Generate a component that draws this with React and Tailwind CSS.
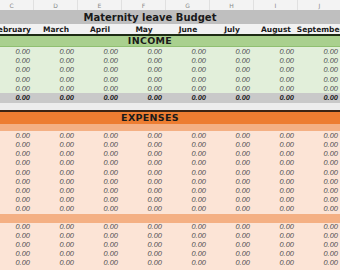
import React from "react"

const cols = ["C", "D", "E", "F", "G", "H", "I", "J"]
const months = ["February", "March", "April", "May", "June", "July", "August", "September"]

function ValueRow({ bg, h = "h-[9.2px]", bold = false }) {
  return (
    <div className={`grid grid-cols-8 ${bg} ${h}`}>
      {cols.map((c) => (
        <div
          key={c}
          className={`flex items-center justify-end pr-[4px] text-[7.5px] italic leading-none ${
            bold ? "font-bold text-[#222]" : "text-[#4f4f4f]"
          }`}
          style={{ fontFamily: '"Liberation Sans", Arial, sans-serif' }}
        >
          0.00
        </div>
      ))}
    </div>
  )
}

export default function App() {
  return (
    <div
      className="w-[340px] h-[270px] overflow-hidden bg-[#fce4d6]"
      style={{ fontFamily: '"DejaVu Sans", "Liberation Sans", sans-serif' }}
    >
      <div className="w-[352px] -ml-[10px]">
        {/* column letters */}
        <div className="grid grid-cols-8 h-[10px] bg-[#f3f3f3]">
          {cols.map((c) => (
            <div
              key={c}
              className="flex items-center justify-center border-r border-[#e0e0e0] text-[6px] text-[#8a8a8a]"
            >
              {c}
            </div>
          ))}
        </div>

        {/* title */}
        <div className="h-[14px] bg-[#bfbfbf] flex items-center justify-center pr-[32px]">
          <span className="text-[10px] font-bold text-[#1a1a1a]">Maternity leave Budget</span>
        </div>

        {/* month headers */}
        <div className="grid grid-cols-8 h-[12px] bg-[#f2f2f2] border-b-2 border-[#1d2b14]">
          {months.map((m) => (
            <div
              key={m}
              className="flex items-center justify-center text-[7.5px] font-bold text-[#1a1a1a] whitespace-nowrap"
            >
              {m}
            </div>
          ))}
        </div>

        {/* income */}
        <div className="h-[11px] bg-[#a9d08e] border-b border-[#8fbf70] flex items-center justify-center pr-[32px]">
          <span className="text-[9.5px] font-bold text-[#1a1a1a] tracking-[0.3px]">INCOME</span>
        </div>
        {[0, 1, 2, 3, 4].map((i) => (
          <ValueRow key={i} bg="bg-[#e2efda]" h="h-[9.3px]" />
        ))}
        <ValueRow bg="bg-[#c9c9c9]" h="h-[9.5px]" bold />
        <div className="h-[7px] bg-[#ededed]" />

        {/* expenses */}
        <div className="h-[14px] bg-[#ed7d31] border-t-2 border-[#3a2414] flex items-center justify-center pr-[32px]">
          <span className="text-[9.5px] font-bold text-[#1a1a1a] tracking-[0.3px]">EXPENSES</span>
        </div>
        <div className="h-[7px] bg-[#f4b084]" />
        {[0, 1, 2, 3, 4, 5, 6, 7, 8].map((i) => (
          <ValueRow key={i} bg="bg-[#fce4d6]" h="h-[9.2px]" />
        ))}
        <div className="h-[9px] bg-[#f4b084]" />
        {[0, 1, 2, 3, 4].map((i) => (
          <ValueRow key={i} bg="bg-[#fce4d6]" h="h-[9px]" />
        ))}
      </div>
    </div>
  )
}
